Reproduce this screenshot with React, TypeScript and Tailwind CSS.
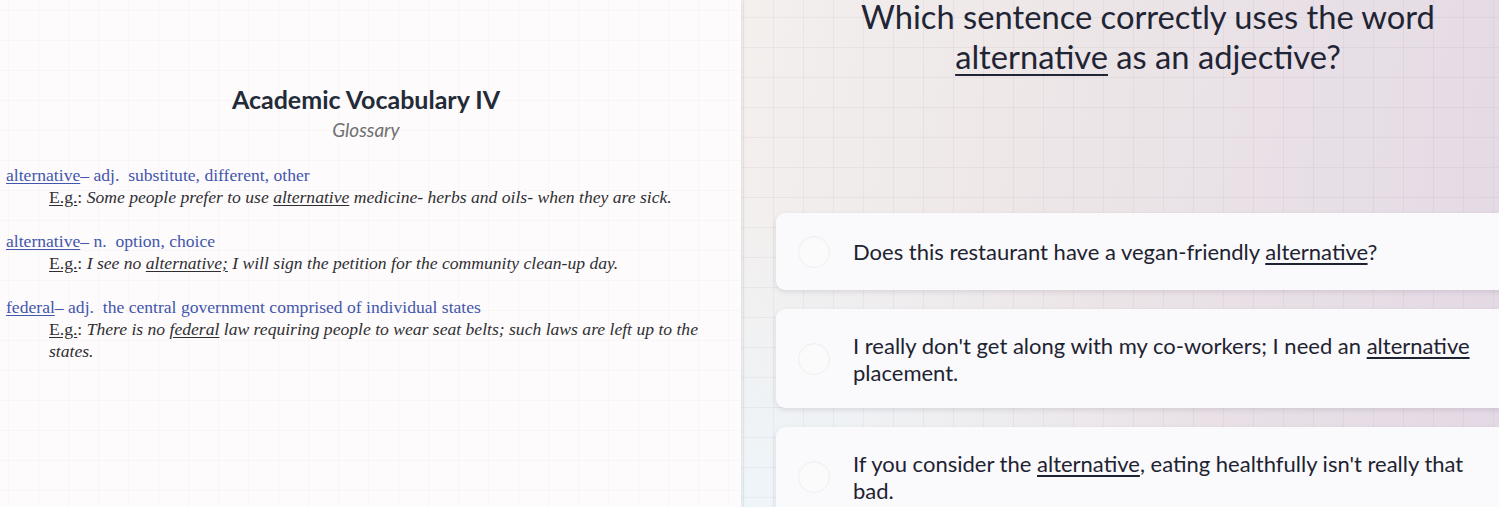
import React from 'react';

const glossary = [
  {
    word: 'alternative',
    pos: 'adj.',
    meaning: 'substitute, different, other',
    before: 'Some people prefer to use ',
    used: 'alternative',
    after: ' medicine- herbs and oils- when they are sick.',
  },
  {
    word: 'alternative',
    pos: 'n.',
    meaning: 'option, choice',
    before: 'I see no ',
    used: 'alternative;',
    after: ' I will sign the petition for the community clean-up day.',
  },
  {
    word: 'federal',
    pos: 'adj.',
    meaning: 'the central government comprised of individual states',
    before: 'There is no ',
    used: 'federal',
    after: ' law requiring people to wear seat belts; such laws are left up to the states.',
  },
];

const options = [
  { before: 'Does this restaurant have a vegan-friendly ', after: '?' },
  { before: "I really don't get along with my co-workers; I need an ", after: ' placement.' },
  { before: 'If you consider the ', after: ", eating healthfully isn't really that bad." },
];

function Glossary() {
  return (
    <div className="relative z-10 h-full w-[741px] shrink-0 bg-[#fdfbfb] bg-[linear-gradient(rgba(0,0,0,0.018)_1px,transparent_1px),linear-gradient(90deg,rgba(0,0,0,0.018)_1px,transparent_1px)] bg-[size:30px_30px] bg-[position:8px_10px] shadow-[2px_0_4px_rgba(0,0,0,0.06)]">
      <div className="pr-[9px] pt-[83px] text-center font-['Lato',sans-serif]">
        <h1 className="text-[25px] font-bold leading-[32px] text-[#232a38]">Academic Vocabulary IV</h1>
        <p className="mt-[3px] text-[19px] italic leading-[24px] text-[#707070]">Glossary</p>
      </div>
      <div className="mt-[22px] pl-[6px] pr-[36px] font-['Liberation_Serif',serif] text-[17.6px] leading-[22px]">
        {glossary.map((g, i) => (
          <div key={i} className="mb-[22px]">
            <p className="text-[#4356ad]">
              <span className="underline underline-offset-2">{g.word}</span>– {g.pos}&nbsp; {g.meaning}
            </p>
            <p className="ml-[43px] text-[#2f2f33]">
              <span className="underline underline-offset-2">E.g.</span>: <i>
                {g.before}
                <span className="underline underline-offset-2">{g.used}</span>
                {g.after}
              </i>
            </p>
          </div>
        ))}
      </div>
    </div>
  );
}

function Quiz() {
  return (
    <div className="h-full flex-1 overflow-hidden bg-[linear-gradient(rgba(120,100,120,0.07)_1px,transparent_1px),linear-gradient(90deg,rgba(120,100,120,0.07)_1px,transparent_1px),radial-gradient(ellipse_at_0%_100%,#eef5f9_0%,rgba(238,245,249,0)_45%),linear-gradient(100deg,#f4f0ee_0%,#ece5e7_45%,#e3d9e5_100%)] bg-[size:30px_30px,30px_30px,100%_100%,100%_100%] bg-[position:2px_17px,2px_17px,0_0,0_0]">
      <div className="ml-[35px] w-[744px] font-['Lato',sans-serif]">
        <h2 className="mt-[-3px] text-center text-[32.7px] leading-[40px] text-[#1f2535]">
          Which sentence correctly uses the word
          <br />
          <span className="underline decoration-2 underline-offset-[5px]">alternative</span> as an adjective?
        </h2>
        <div className="mt-[136px] flex flex-col gap-[19px]">
          {options.map((o, i) => (
            <div
              key={i}
              className="flex items-center gap-[23px] rounded-[9px] bg-[#faf9fb] py-[22.5px] pl-[22px] pr-[22px] shadow-[0_2px_5px_rgba(60,40,70,0.12)]"
            >
              <div className="h-[32px] w-[32px] shrink-0 rounded-full border border-[#f0eef1] bg-[#fbfbfc] shadow-[inset_0_1px_2px_rgba(0,0,0,0.025)]" />
              <p className="text-[22px] leading-[27px] text-[#1e2331]">
                {o.before}
                <span className="underline decoration-[1.5px] underline-offset-[3px]">alternative</span>
                {o.after}
              </p>
            </div>
          ))}
        </div>
      </div>
    </div>
  );
}

export default function App() {
  return (
    <div className="flex h-[507px] w-[1499px] overflow-hidden">
      <Glossary />
      <Quiz />
    </div>
  );
}
